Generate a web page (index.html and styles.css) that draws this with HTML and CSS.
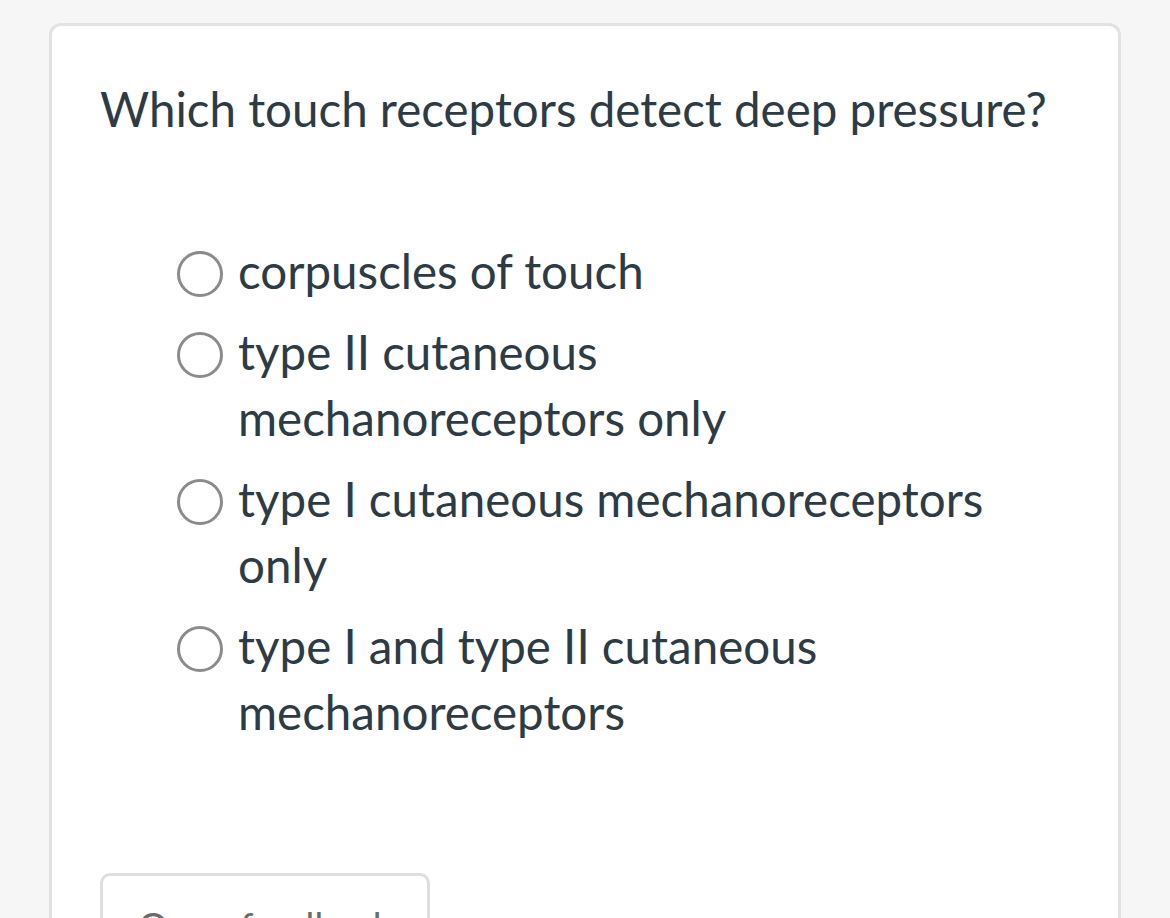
FILE: index.html
```html
<!DOCTYPE html>
<html>
<head>
  <meta charset="UTF-8">
  <meta name="viewport" content="width=device-width, initial-scale=1.0">
  <title>Quiz Question</title>
  <link rel="stylesheet" href="styles.css">
</head>
<body>
  <div class="card">
    <h2 class="question">Which touch receptors detect deep pressure?</h2>

    <ul class="answers">
      <li class="answer">
        <span class="radio"></span>
        <span class="answer-text">corpuscles of touch</span>
      </li>
      <li class="answer">
        <span class="radio"></span>
        <span class="answer-text">type II cutaneous mechanoreceptors only</span>
      </li>
      <li class="answer">
        <span class="radio"></span>
        <span class="answer-text">type I cutaneous mechanoreceptors only</span>
      </li>
      <li class="answer">
        <span class="radio"></span>
        <span class="answer-text">type I and type II cutaneous mechanoreceptors</span>
      </li>
    </ul>

    <button class="feedback-button">Open feedback</button>
  </div>
</body>
</html>
```

FILE: styles.css
```css
/* Page */
body {
  font-family: Lato, "Noto Sans", sans-serif;
  background-color: #f6f6f6;
  color: #2d3b45;
  margin: 0;
  padding: 23px 0 0 49px;
}
.card {
  width: 1072px;
  box-sizing: border-box;
  background-color: white;
  border: 3px solid #e2e2e2;
  border-radius: 12px;
  padding: 50px 48px 0 48px;
  height: 920px;
}
.question {
  font-size: 47.5px;
  font-weight: normal;
  line-height: 66px;
  margin: 0;
}
.answers {
  list-style: none;
  margin: 96px 0 0 77px;
  padding: 0;
  width: 813px;
}
.answer {
  display: flex;
  align-items: flex-start;
  gap: 15px;
  margin-bottom: 15px;
}
.radio {
  flex: none;
  width: 46px;
  height: 46px;
  margin-top: 13px;
  box-sizing: border-box;
  border: 3px solid #8b8b8b;
  border-radius: 50%;
}
.answer-text {
  font-size: 47.5px;
  line-height: 66px;
}
.feedback-button {
  margin-top: 113px;
  width: 330px;
  padding: 27px 0;
  background: white;
  border: 3px solid #dedede;
  border-radius: 10px;
  font-family: Lato, sans-serif;
  font-size: 38px;
  line-height: 46px;
  color: #6b6b6b;
}
```
